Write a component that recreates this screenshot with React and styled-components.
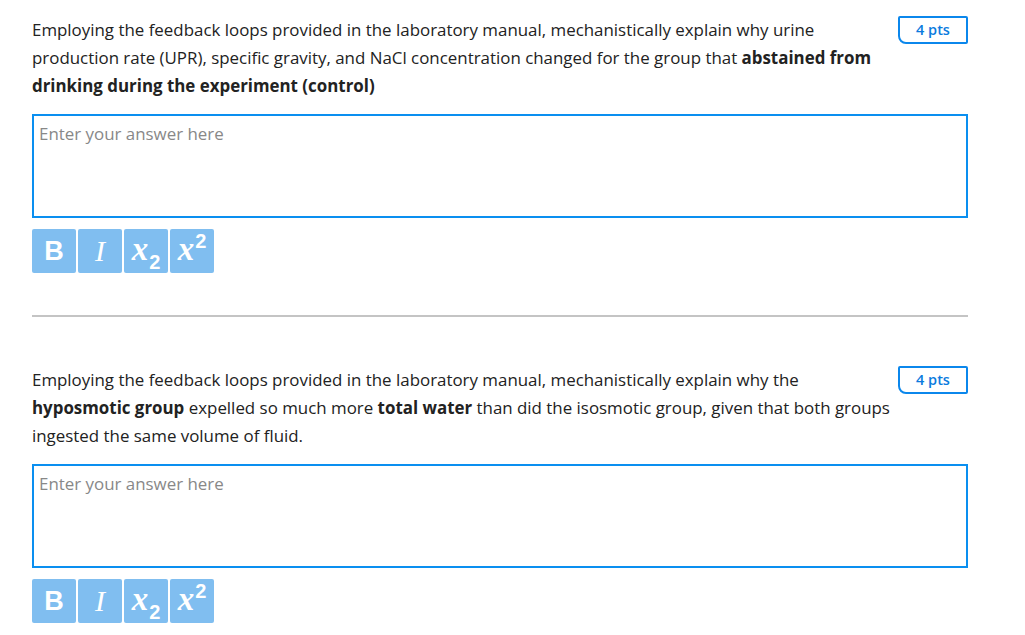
import styled, { createGlobalStyle } from "styled-components";

const GlobalStyle = createGlobalStyle`
  body {
    margin: 0;
    background: #ffffff;
    font-family: "Open Sans", "Noto Sans", sans-serif;
  }
`;

const Page = styled.div`
  width: 936px;
  padding: 16px 0 0 32px;
`;

const Question = styled.section`
  display: flex;
  flex-direction: column;
`;

const Header = styled.div`
  display: flex;
  align-items: flex-start;
`;

const Prompt = styled.p`
  flex: 0 0 866px;
  margin: 0;
  font-size: 16.9px;
  line-height: 28px;
  color: #222222;

  strong {
    font-weight: 700;
  }
`;

const Points = styled.span`
  box-sizing: border-box;
  width: 70px;
  height: 28px;
  border: 2px solid #0b87ec;
  border-radius: 2px 2px 2px 8px;
  color: #0b7bde;
  font-size: 14.5px;
  font-weight: 600;
  line-height: 24px;
  text-align: center;
`;

const Answer = styled.textarea`
  box-sizing: border-box;
  display: block;
  width: 936px;
  height: 104px;
  margin-top: 14px;
  padding: 6px 5px;
  border: 2px solid #0a8ff0;
  border-radius: 0;
  outline: none;
  resize: none;
  font-family: "Open Sans", "Noto Sans", sans-serif;
  font-size: 16.9px;
  line-height: 24px;
  color: #333;

  &::placeholder {
    color: #888;
  }
`;

const Toolbar = styled.div`
  display: flex;
  gap: 2px;
  margin-top: 11px;
`;

const ToolButton = styled.button`
  box-sizing: border-box;
  width: 44px;
  height: 44px;
  padding: 0;
  border: none;
  border-radius: 2px;
  background: #80bef0;
  color: #ffffff;
  display: flex;
  align-items: center;
  justify-content: center;
`;

const Glyph = styled.span`
  font-family: ${(p) =>
    p.$kind === "bold" ? '"Liberation Sans", Arial, sans-serif' : '"Liberation Serif", "DejaVu Serif", serif'};
  font-size: ${(p) => (p.$kind === "math" ? "33px" : p.$kind === "italic" ? "30px" : "27px")};
  font-weight: ${(p) => (p.$kind === "italic" ? 400 : 700)};
  font-style: ${(p) => (p.$kind === "bold" ? "normal" : "italic")};
  line-height: 1;
  margin-top: ${(p) => (p.$kind === "math" ? "-4px" : "0")};

  sub,
  sup {
    font-family: "Liberation Sans", Arial, sans-serif;
    font-style: normal;
    font-weight: 700;
    font-size: 20px;
    line-height: 0;
    margin-left: 1px;
  }
  sub {
    vertical-align: -9px;
  }
  sup {
    vertical-align: 12px;
  }
`;

const Divider = styled.hr`
  margin: 42px 0 49px;
  border: none;
  height: 2px;
  background: #c4c4c4;
`;

function Editor() {
  return (
    <>
      <Answer placeholder="Enter your answer here" />
      <Toolbar>
        <ToolButton>
          <Glyph $kind="bold">B</Glyph>
        </ToolButton>
        <ToolButton>
          <Glyph $kind="italic">I</Glyph>
        </ToolButton>
        <ToolButton>
          <Glyph $kind="math">
            x<sub>2</sub>
          </Glyph>
        </ToolButton>
        <ToolButton>
          <Glyph $kind="math">
            x<sup>2</sup>
          </Glyph>
        </ToolButton>
      </Toolbar>
    </>
  );
}

export default function App() {
  return (
    <Page>
      <GlobalStyle />
      <Question>
        <Header>
          <Prompt>
            Employing the feedback loops provided in the laboratory manual, mechanistically explain why urine
            production rate (UPR), specific gravity, and NaCl concentration changed for the group that{" "}
            <strong>abstained from drinking during the experiment (control)</strong>
          </Prompt>
          <Points>4 pts</Points>
        </Header>
        <Editor />
      </Question>
      <Divider />
      <Question>
        <Header>
          <Prompt>
            Employing the feedback loops provided in the laboratory manual, mechanistically explain why the{" "}
            <strong>hyposmotic group</strong> expelled so much more <strong>total water</strong> than did the
            isosmotic group, given that both groups ingested the same volume of fluid.
          </Prompt>
          <Points>4 pts</Points>
        </Header>
        <Editor />
      </Question>
    </Page>
  );
}
